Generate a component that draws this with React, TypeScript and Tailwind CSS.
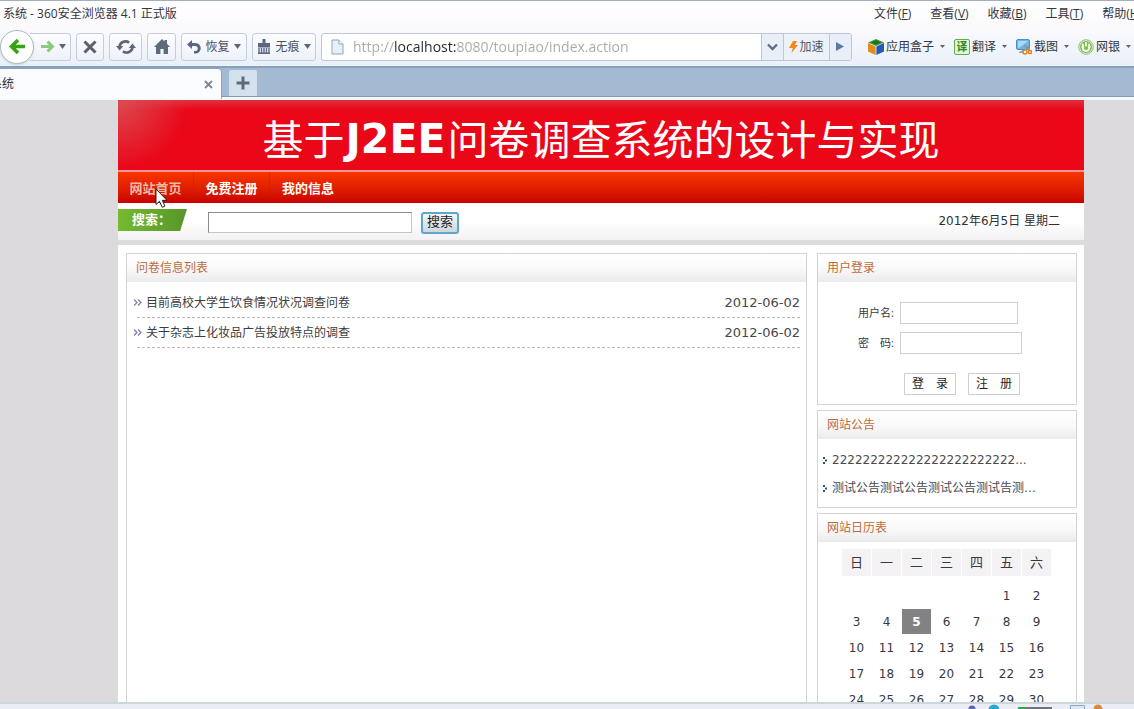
import { useState, type ReactNode } from 'react';

const MENUS = [
  { label: '文件', key: 'F' },
  { label: '查看', key: 'V' },
  { label: '收藏', key: 'B' },
  { label: '工具', key: 'T' },
  { label: '帮助', key: 'H' },
];

const NAV_ITEMS = ['网站首页', '免费注册', '我的信息'];

const SURVEYS = [
  { title: '目前高校大学生饮食情况状况调查问卷', date: '2012-06-02' },
  { title: '关于杂志上化妆品广告投放特点的调查', date: '2012-06-02' },
];

const NOTICES = ['222222222222222222222222...', '测试公告测试公告测试公告测试告测…'];

const WEEKDAYS = ['日', '一', '二', '三', '四', '五', '六'];
const FIRST_WEEKDAY = 5;
const DAYS_IN_MONTH = 30;
const TODAY = 5;

function buildWeeks() {
  const cells: (number | null)[] = Array(FIRST_WEEKDAY).fill(null);
  for (let day = 1; day <= DAYS_IN_MONTH; day++) cells.push(day);
  const weeks: (number | null)[][] = [];
  for (let i = 0; i < cells.length; i += 7) weeks.push(cells.slice(i, i + 7));
  return weeks;
}

function Caret() {
  return (
    <svg width="7" height="5" viewBox="0 0 7 5" className="shrink-0" aria-hidden="true">
      <path d="M0 0h7L3.5 5z" fill="#5d6672" />
    </svg>
  );
}

function ToolButton({ label, className, children }: { label: string; className: string; children: ReactNode }) {
  return (
    <button
      type="button"
      aria-label={label}
      className={`flex h-7 shrink-0 items-center justify-center rounded-[3px] border border-[#c3cddb] bg-linear-to-b from-[#fdfdff] to-[#edf1f8] text-[#4b525c] ${className}`}
    >
      {children}
    </button>
  );
}

function BoxIcon() {
  return (
    <svg width="16" height="16" viewBox="0 0 16 16" aria-hidden="true">
      <path d="M8 0l8 3.5L8 7 0 3.5z" fill="#3f9a2c" />
      <path d="M0 4l7.6 3.6V16L0 12.4z" fill="#e58a1f" />
      <path d="M16 4L8.4 7.6V16L16 12.4z" fill="#2459b8" />
      <path d="M3 3.5L8 1.3l5 2.2-5 2.1z" fill="#1f6d2a" />
    </svg>
  );
}

function TranslateIcon() {
  return (
    <span className="flex size-4 items-center justify-center rounded-[2px] border border-[#5fae4e] bg-[#e3f6d6] text-[11px] leading-3 font-bold text-[#2f8a26]">
      译
    </span>
  );
}

function CaptureIcon() {
  return (
    <svg width="16" height="16" viewBox="0 0 16 16" aria-hidden="true">
      <rect x="0.5" y="0.5" width="13" height="10" rx="1.5" fill="#6db5e6" stroke="#4b8fc6" />
      <path d="M2 2h10L3 9H2z" fill="#a9d8f5" />
      <path d="M3 13l4-2v3H3z" fill="#8ca9c3" />
      <path d="M8 6l6 6M14 6l-5 6" stroke="#8a8f99" strokeWidth="1.3" />
      <circle cx="9" cy="13" r="2" fill="#fff" stroke="#e8801c" strokeWidth="1.5" />
      <circle cx="14" cy="13" r="1.6" fill="#fff" stroke="#e8801c" strokeWidth="1.5" />
    </svg>
  );
}

function BankIcon() {
  return (
    <svg width="16" height="16" viewBox="0 0 16 16" aria-hidden="true">
      <circle cx="8" cy="8" r="7.3" fill="#dceed0" stroke="#9cb890" />
      <circle cx="8" cy="8" r="6" fill="#7cc24a" />
      <path d="M4.8 4.8v4a3.200 3.200 0 0 0 6.400 0v-4" fill="none" stroke="#fff" strokeWidth="1.8" />
      <path d="M8 3v4.500M3.500 8h2.500M10 8h2.500" stroke="#fff" strokeWidth="1.600" />
    </svg>
  );
}

const EXTENSIONS = [
  { label: '应用盒子', icon: <BoxIcon /> },
  { label: '翻译', icon: <TranslateIcon /> },
  { label: '截图', icon: <CaptureIcon /> },
  { label: '网银', icon: <BankIcon /> },
];

function TitleBar() {
  return (
    <div className="flex h-7 shrink-0 items-center justify-between border-t border-[#a3afbd] bg-linear-to-b from-white to-[#fcf9fd] pb-px pl-[3px] text-xs leading-4 text-[#33363b]">
      <span>系统 - 360安全浏览器 4.1 正式版</span>
      <nav className="flex w-[260px] gap-[19px] overflow-hidden whitespace-nowrap">
        {MENUS.map((menu) => (
          <button key={menu.key} type="button" className="shrink-0">
            {menu.label}(<u>{menu.key}</u>)
          </button>
        ))}
      </nav>
    </div>
  );
}

function AddressBar() {
  const [url, setUrl] = useState('http://localhost:8080/toupiao/index.action');

  return (
    <div className="flex h-7 min-w-0 flex-1 items-stretch overflow-hidden rounded-[3px] border border-[#bcc8d8] bg-white">
      <div className="flex min-w-0 flex-1 items-center gap-2 pl-2">
        <svg width="15" height="16" viewBox="0 0 15 16" className="shrink-0" aria-hidden="true">
          <path d="M2 1h7l4 4v10H2z" fill="#e6f0f8" stroke="#8fa5b8" />
          <path d="M9 1v4h4" fill="#fff" stroke="#8fa5b8" />
        </svg>
        {/* only the host part of the address is dark */}
        <input
          aria-label="地址"
          value={url}
          onChange={(e) => setUrl(e.target.value)}
          className="min-w-0 flex-1 bg-[linear-gradient(90deg,#aaa9a2_41px,#25282c_41px,#25282c_103px,#aaa9a2_103px)] bg-clip-text font-['Open_Sans',sans-serif] text-sm text-transparent outline-none"
        />
      </div>
      <button type="button" aria-label="历史" className="flex w-[22px] items-center justify-center border-l border-[#bcc8d8] bg-[#e9eff8]">
        <svg width="11" height="8" viewBox="0 0 11 8" aria-hidden="true">
          <path d="M1 1.5l4.5 4.5L10 1.5" fill="none" stroke="#5b6f8e" strokeWidth="2.4" />
        </svg>
      </button>
      <button type="button" className="flex w-[46px] items-center justify-center gap-px border-l border-[#bcc8d8] bg-[#edf1f8] text-xs text-[#4d5968]">
        <svg width="9" height="12" viewBox="0 0 9 12" aria-hidden="true">
          <path d="M4 0h4L6 4h3L2.5 12l1.2-5H0z" fill="#f08a1d" />
        </svg>
        加速
      </button>
      <button type="button" aria-label="转到" className="flex w-[22px] items-center justify-center border-l border-[#bcc8d8] bg-[#e9eff8]">
        <svg width="8" height="9" viewBox="0 0 8 9" aria-hidden="true">
          <path d="M0 0l8 4.5L0 9z" fill="#5e76a3" />
        </svg>
      </button>
    </div>
  );
}

function Toolbar() {
  return (
    <div className="flex h-[38px] shrink-0 items-center gap-[5px] bg-linear-to-b from-[#fbfaff] to-[#e9f0f8] pr-[3px] pb-px text-xs">
      <div className="flex shrink-0 items-center">
        <button
          type="button"
          aria-label="后退"
          className="z-10 flex size-[34px] items-center justify-center rounded-full border border-[#adb9c6] bg-white shadow-sm"
        >
          <svg width="17" height="17" viewBox="0 0 17 17" aria-hidden="true">
            <path d="M9 2L2.5 8.5 9 15M3 8.5h13" fill="none" stroke="#36a412" strokeWidth="3.6" />
          </svg>
        </button>
        <button
          type="button"
          aria-label="前进"
          className="-ml-1 flex h-7 w-[41px] items-center justify-end gap-1 rounded-r-[3px] border border-l-0 border-[#c3cddb] bg-linear-to-b from-[#fdfdff] to-[#edf1f8] pr-1"
        >
          <svg width="14" height="13" viewBox="0 0 14 13" aria-hidden="true">
            <path d="M6.5 1.5l5 5-5 5M11 6.5H0" fill="none" stroke="#8ccb7d" strokeWidth="3" />
          </svg>
          <Caret />
        </button>
      </div>
      <ToolButton label="停止" className="w-[28px]">
        <svg width="14" height="14" viewBox="0 0 14 14" aria-hidden="true">
          <path d="M1.5 1.5l11 11M12.5 1.5l-11 11" stroke="#59616d" strokeWidth="3" />
        </svg>
      </ToolButton>
      <ToolButton label="刷新" className="w-[33px]">
        <svg width="20" height="16" viewBox="0 0 20 16" aria-hidden="true">
          <path d="M3.5 8a6 5.6 0 0 1 9.6-4.4M16.5 8a6 5.6 0 0 1-9.6 4.4" fill="none" stroke="#5d6672" strokeWidth="2.6" />
          <path d="M0 7h7.2L3.6 11.6zM20 9h-7.2l3.6-4.6z" fill="#5d6672" />
        </svg>
      </ToolButton>
      <ToolButton label="主页" className="w-[29px]">
        <svg width="16" height="15" viewBox="0 0 16 15" aria-hidden="true">
          <path d="M8 0l2.5 2.4V1H13v3.8L16 8h-2v7H9.6v-5H6.4v5H2V8H0z" fill="#5d6b7c" />
        </svg>
      </ToolButton>
      <ToolButton label="恢复" className="w-[66px] gap-1">
        <svg width="14" height="14" viewBox="0 0 14 14" aria-hidden="true">
          <path d="M5 0v3h3.5a5 5 0 0 1 0 10.5H7v-2.6h1.2a2.5 2.5 0 0 0 0-5H5v3L0 4.5z" fill="#5a6980" />
        </svg>
        <span>恢复</span>
        <Caret />
      </ToolButton>
      <ToolButton label="无痕" className="w-[64px] gap-1">
        <svg width="14" height="15" viewBox="0 0 14 15" aria-hidden="true">
          <path d="M5.500 0h3v4H13v4.500H1V4h4.500z" fill="#5a6980" />
          <path d="M2 9v5.500M4.500 9v5.500M7 9v5.500M9.500 9v5.500M12 9v5.500M1 14.200h12" stroke="#5a6980" strokeWidth="1.400" />
        </svg>
        <span>无痕</span>
        <Caret />
      </ToolButton>
      <AddressBar />
      <div className="ml-[11px] flex shrink-0 gap-[9px] text-[#33383f]">
        {EXTENSIONS.map((item) => (
          <button key={item.label} type="button" className="flex items-center gap-[2px]">
            {item.icon}
            <span>{item.label}</span>
            <svg width="5" height="3" viewBox="0 0 5 3" className="ml-1" aria-hidden="true">
              <path d="M0 0h5L2.5 3z" fill="#5d6672" />
            </svg>
          </button>
        ))}
      </div>
    </div>
  );
}

function TabStrip() {
  return (
    <div className="flex h-[34px] shrink-0 items-start gap-[7px] border-t-2 border-[#86a1bb] bg-[linear-gradient(#a4bad3_28px,#8199b1_28px,#8199b1_29px,#f5f9fd_29px)]">
      <div className="flex h-[31px] w-[222px] items-center justify-between rounded-tr-[4px] border-t border-r border-[#8ba4bd] bg-[#fbfcff] pr-2 text-xs text-[#2b2f35]">
        <span className="flex w-[14px] justify-end overflow-hidden whitespace-nowrap">系统</span>
        <button type="button" aria-label="关闭标签页">
          <svg width="9" height="9" viewBox="0 0 9 9" aria-hidden="true">
            <path d="M1 1l7 7M8 1L1 8" stroke="#7b8796" strokeWidth="1.8" />
          </svg>
        </button>
      </div>
      <button
        type="button"
        aria-label="新建标签页"
        className="mt-[2px] flex h-[26px] w-[28px] items-center justify-center rounded-t-[2px] bg-[#d3e0ee]"
      >
        <svg width="14" height="14" viewBox="0 0 14 14" aria-hidden="true">
          <path d="M7 0.5v13M0.5 7h13" stroke="#5f6a77" strokeWidth="3" />
        </svg>
      </button>
    </div>
  );
}

function Banner() {
  return (
    <header className="flex h-[70px] items-center justify-center bg-[#e90718] bg-[radial-gradient(circle_at_0%_0%,#dc4a52_0px,transparent_70px),linear-gradient(#e2303b,transparent_10px)] pt-2">
      <h1 className="flex items-center text-[41px] leading-[48px] font-normal whitespace-nowrap text-white">
        基于
        <span className="mr-[2px] ml-px font-['DejaVu_Sans',sans-serif] font-bold">J2EE</span>
        问卷调查系统的设计与实现
      </h1>
    </header>
  );
}

function SiteNav() {
  return (
    <nav className="h-[33px] border-t-2 border-[#f3969c] bg-linear-to-b from-[#f93400] to-[#c80000]">
      <ul className="flex h-[31px] items-center text-[13px] font-bold">
        {NAV_ITEMS.map((item, index) => (
          <li key={item} className="relative flex h-full w-[76px] items-center justify-center border-r border-[#cf1a00]/50 pt-[2px] last:border-r-0">
            <a href="#" className={index === 0 ? 'text-[#f3b9a6]' : 'text-white'}>
              {item}
            </a>
            {index === 0 && (
              <svg width="13" height="20" viewBox="0 0 13 20" className="pointer-events-none absolute top-4 left-[37px] z-10" aria-hidden="true">
                <path d="M1 1v15.500l3.500-3.200 2.700 6 2.700-1.200-2.600-5.800H12z" fill="#fff" stroke="#222" />
              </svg>
            )}
          </li>
        ))}
      </ul>
    </nav>
  );
}

function SearchRow() {
  return (
    <form
      onSubmit={(e) => e.preventDefault()}
      className="flex h-[37px] items-start bg-linear-to-b from-white via-white to-[#f3f1f3] pr-6 text-xs"
    >
      <label
        htmlFor="keyword"
        className="mt-[6px] flex h-[22px] w-[69px] items-center bg-linear-to-r from-[#76ba31] to-[#579629] pl-[14px] text-[13px] font-bold text-white [clip-path:polygon(0_0,100%_0,90%_100%,0_100%)]"
      >
        搜索：
      </label>
      <input id="keyword" className="mt-[9px] ml-[21px] h-[21px] w-[204px] border border-[#c5c5c9] border-t-[#8a8a8f] border-l-[#8a8a8f] bg-white px-1 outline-none" />
      <button
        type="submit"
        className="mt-[9px] ml-[9px] h-[22px] w-[38px] rounded-[3px] border-2 border-[#5aa9cc] bg-linear-to-b from-[#f4f6f8] to-[#cfd7dd] pb-1 text-[13px] leading-[14px] text-[#1d1d1f]"
      >
        搜索
      </button>
      <p className="mt-[10px] ml-auto font-['DejaVu_Sans','Noto_Sans_CJK_SC',sans-serif] leading-4 text-[#2f2f33]">
        2012年6月5日 星期二
      </p>
    </form>
  );
}

function Panel({ title, className = '', children }: { title: string; className?: string; children: ReactNode }) {
  return (
    <section className={`border border-[#d4d4d7] bg-white ${className}`}>
      <h2 className="h-7 bg-linear-to-b from-white via-[#fbfafb] to-[#ebebec] pl-[9px] text-xs leading-7 text-[#bf6a3b]">{title}</h2>
      {children}
    </section>
  );
}

function SurveyList() {
  return (
    <ul className="pt-[6px] pr-[6px] pl-[10px]">
      {SURVEYS.map((survey) => (
        <li key={survey.title} className="flex h-[30px] items-center border-b border-dashed border-[#b9babc]">
          <svg width="9" height="7" viewBox="0 0 9 7" className="-ml-1 shrink-0" aria-hidden="true">
            <path d="M1 0.5l3 3-3 3M5 0.5l3 3-3 3" fill="none" stroke="#7d82a6" strokeWidth="1.3" />
          </svg>
          <a href="#" className="ml-1 text-xs text-[#3c3c3f]">
            {survey.title}
          </a>
          <time className="ml-auto font-['DejaVu_Sans',sans-serif] text-[13px] text-[#47474a]">{survey.date}</time>
        </li>
      ))}
    </ul>
  );
}

function LoginForm() {
  return (
    <form onSubmit={(e) => e.preventDefault()} className="flex flex-col gap-2 pt-5 pb-[9px] text-[11px] text-[#3c3c3f]">
      <div className="flex items-center gap-[6px]">
        <label htmlFor="username" className="w-[76px] text-right">
          用户名:
        </label>
        <input id="username" className="h-[22px] w-[118px] border border-[#cfcfd2] px-1 outline-none" />
      </div>
      <div className="flex items-center gap-[6px]">
        <label htmlFor="password" className="w-[76px] text-right">
          密　码:
        </label>
        <input id="password" type="password" className="h-[22px] w-[122px] border border-[#cfcfd2] px-1 outline-none" />
      </div>
      <div className="mt-[11px] flex gap-3 pl-[86px] text-xs text-[#1f1f22]">
        <button type="submit" className="h-[22px] w-[52px] border border-[#cfcfd2] bg-white">
          登　录
        </button>
        <button type="button" className="h-[22px] w-[52px] border border-[#cfcfd2] bg-white">
          注　册
        </button>
      </div>
    </form>
  );
}

function NoticeList() {
  return (
    <ul className="pt-[7px] pb-[5px] pl-1 text-xs text-[#4a4a4d]">
      {NOTICES.map((notice) => (
        <li key={notice} className="flex h-7 items-center gap-1">
          <svg width="6" height="7" viewBox="0 0 6 7" className="shrink-0" aria-hidden="true">
            <path d="M1 0h2v2H1zM3 2.5h2v2H3zM1 5h2v2H1z" fill="#2f5573" />
          </svg>
          <a href="#" className="font-['DejaVu_Sans','Noto_Sans_CJK_SC',sans-serif]">
            {notice}
          </a>
        </li>
      ))}
    </ul>
  );
}

function Calendar() {
  return (
    <table className="mt-[6px] ml-[23px] border-separate border-spacing-px text-center font-['DejaVu_Sans','Noto_Sans_CJK_SC',sans-serif] text-xs leading-4 text-[#39393c]">
      <thead>
        <tr>
          {WEEKDAYS.map((day) => (
            <th key={day} scope="col" className="h-[27px] w-[29px] bg-[#f5f2f5] p-0 text-[13px] font-normal">
              {day}
            </th>
          ))}
        </tr>
      </thead>
      <tbody>
        {buildWeeks().map((week, row) => (
          <tr key={row}>
            {week.map((day, column) => (
              <td
                key={column}
                className={
                  row === 0
                    ? 'h-[31px] w-[29px] p-0 pt-[6px]'
                    : day === TODAY
                      ? 'h-[25px] w-[29px] bg-[#828284] p-0 font-bold text-white'
                      : 'h-[25px] w-[29px] p-0'
                }
              >
                {day}
              </td>
            ))}
          </tr>
        ))}
      </tbody>
    </table>
  );
}

function StatusBar() {
  return (
    <footer className="flex h-[7px] shrink-0 justify-end overflow-hidden border-t-2 border-[#ccd6dc] bg-[#eaedf5] pr-[22px]">
      <svg width="146" height="5" viewBox="0 0 146 5" aria-hidden="true">
        <circle cx="6" cy="5" r="3.5" fill="#5867a8" />
        <circle cx="28" cy="6" r="5.5" fill="#25a9cf" />
        <path d="M52 4h34" stroke="#6f7478" strokeWidth="2" />
        <path d="M52 4h8" stroke="#2fa84d" strokeWidth="2" />
        <path d="M104.500 5V1.500h14V5" fill="#dbe8f4" stroke="#8fa9c4" />
        <circle cx="132" cy="5" r="4.500" fill="#d98a3e" />
      </svg>
    </footer>
  );
}

export default function App() {
  return (
    <div className="flex h-screen flex-col overflow-hidden bg-[#dddadd] font-['Open_Sans','Noto_Sans_CJK_SC',sans-serif]">
      <TitleBar />
      <Toolbar />
      <TabStrip />
      <div className="flex min-h-0 flex-1 flex-col overflow-hidden pr-[50px] pl-[118px]">
        <Banner />
        <SiteNav />
        <SearchRow />
        <main className="mt-[5px] flex min-h-0 flex-1 gap-[10px] bg-white pt-2 pr-[7px] pl-2">
          <Panel title="问卷信息列表" className="min-w-0 flex-1 border-b-0">
            <SurveyList />
          </Panel>
          <aside className="flex w-[260px] shrink-0 flex-col gap-[5px]">
            <Panel title="用户登录">
              <LoginForm />
            </Panel>
            <Panel title="网站公告">
              <NoticeList />
            </Panel>
            <Panel title="网站日历表">
              <Calendar />
            </Panel>
          </aside>
        </main>
      </div>
      <StatusBar />
    </div>
  );
}
